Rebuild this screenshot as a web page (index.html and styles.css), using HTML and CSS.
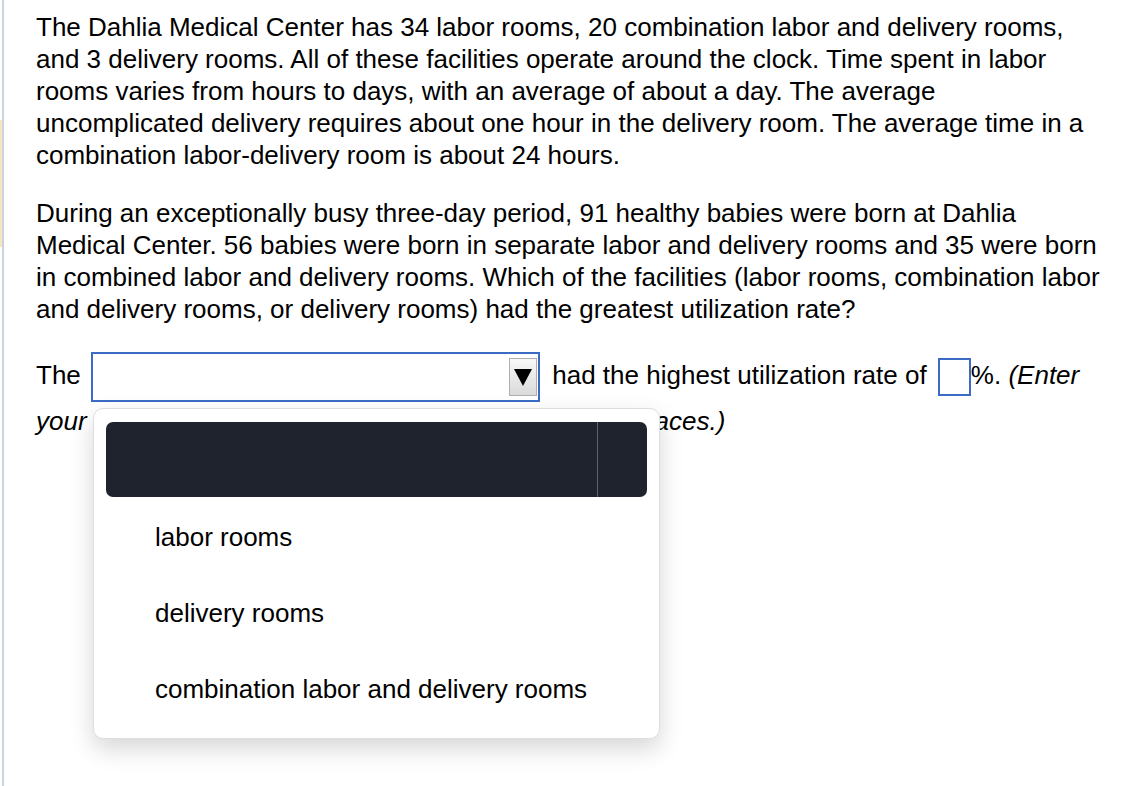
FILE: index.html
```html
<!DOCTYPE html>
<html lang="en">
<head>
  <meta charset="UTF-8">
  <title>Utilization rate</title>
  <link rel="stylesheet" href="styles.css">
</head>
<body>

  <div class="marca"></div>

  <div class="pregunta">
    <p>The Dahlia Medical Center has 34 labor rooms, 20 combination labor and delivery rooms,<br>
    and 3 delivery rooms. All of these facilities operate around the clock. Time spent in labor<br>
    rooms varies from hours to days, with an average of about a day. The average<br>
    uncomplicated delivery requires about one hour in the delivery room. The average time in a<br>
    combination labor-delivery room is about 24 hours.</p>

    <p>During an exceptionally busy three-day period, 91 healthy babies were born at Dahlia<br>
    Medical Center. 56 babies were born in separate labor and delivery rooms and 35 were born<br>
    in combined labor and delivery rooms. Which of the facilities (labor rooms, combination labor<br>
    and delivery rooms, or delivery rooms) had the greatest utilization rate?</p>

    <p class="respuesta">
      The
      <span class="combo">
        <span class="flecha">
          <svg width="18" height="17" viewBox="0 0 18 17"><polygon points="0,0 18,0 9,17" fill="#000"/></svg>
        </span>
      </span>
      had the highest utilization rate of
      <span class="casilla"></span>%. <i>(Enter<br>your response as a percent rounded to two decimal places.)</i>
    </p>

    <!-- lista abierta del combo -->
    <div class="lista">
      <div class="lista-barra"><span class="divisor"></span></div>
      <div class="opcion">labor rooms</div>
      <div class="opcion">delivery rooms</div>
      <div class="opcion">combination labor and delivery rooms</div>
    </div>
  </div>

</body>
</html>
```

FILE: styles.css
```css
body {
  margin: 0;
  padding: 0;
  background: #fff;
  font-family: 'Liberation Sans', Arial, sans-serif;
  color: #000;
}

/* franja amarilla del borde */
.marca {
  position: absolute;
  left: 0;
  top: 120px;
  width: 2px;
  height: 127px;
  background: #f3e7c0;
}

.pregunta {
  position: relative;
  border-left: 2px solid #ccd2df;
  margin-left: 2px;
  min-height: 786px;
  box-sizing: border-box;
  padding: 11px 0 0 32px;
  font-size: 26px;
  line-height: 32px;
  white-space: nowrap;
}

.pregunta p {
  margin: 0 0 26px 0;
}

.respuesta {
  line-height: 38px;
  margin-top: 27px !important;
}

.combo {
  display: inline-block;
  position: relative;
  width: 445px;
  height: 46px;
  border: 2px solid #3c6bc6;
  vertical-align: middle;
  margin: 0 5px 0 3px;
}

.flecha {
  position: absolute;
  right: 1px;
  top: 4px;
  width: 28px;
  height: 38px;
  box-sizing: border-box;
  border: 1px solid #b0b0b0;
  background: linear-gradient(#f8f8f8, #dadada);
  display: flex;
  align-items: center;
  justify-content: center;
}

.flecha svg {
  display: block;
}

.casilla {
  display: inline-block;
  width: 29px;
  height: 34px;
  border: 2px solid #3c6bc6;
  vertical-align: middle;
  margin-left: 4px;
}

/* lista desplegada */
.lista {
  position: absolute;
  left: 89px;
  top: 408px;
  width: 567px;
  height: 331px;
  box-sizing: border-box;
  background: #fff;
  border: 1px solid #dedede;
  border-radius: 10px;
  box-shadow: 0 10px 24px rgba(0,0,0,0.16);
  padding: 13px 12px 0 12px;
  white-space: normal;
}

.lista-barra {
  position: relative;
  height: 75px;
  background: #1f232e;
  border-radius: 7px;
}

.divisor {
  position: absolute;
  left: 491px;
  top: 0;
  bottom: 0;
  width: 1px;
  background: #5d626d;
}

.opcion {
  height: 76px;
  line-height: 76px;
  padding-left: 49px;
  font-size: 26px;
}

.lista-barra + .opcion {
  margin-top: 2px;
}
```
